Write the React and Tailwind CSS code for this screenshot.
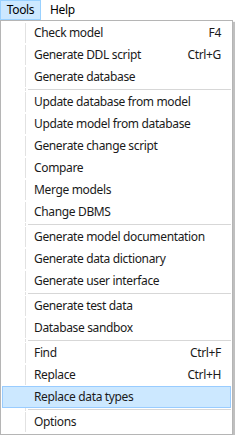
import React from 'react';

const items = [
    { label: 'Check model', shortcut: 'F4' },
    { label: 'Generate DDL script', shortcut: 'Ctrl+G' },
    { label: 'Generate database' },
    { sep: true },
    { label: 'Update database from model' },
    { label: 'Update model from database' },
    { label: 'Generate change script' },
    { label: 'Compare' },
    { label: 'Merge models' },
    { label: 'Change DBMS' },
    { sep: true },
    { label: 'Generate model documentation' },
    { label: 'Generate data dictionary' },
    { label: 'Generate user interface' },
    { sep: true },
    { label: 'Generate test data' },
    { label: 'Database sandbox' },
    { sep: true },
    { label: 'Find', shortcut: 'Ctrl+F' },
    { label: 'Replace', shortcut: 'Ctrl+H' },
    { label: 'Replace data types', active: true },
    { sep: true },
    { label: 'Options' },
];

function MenuRow({ item }) {
    if (item.sep) {
        return (
            <div className="flex h-[3px]">
                <div className="w-[24px] shrink-0 border-r border-[#e2e2e2]"></div>
                <div className="flex-1 flex items-center ml-[2px]">
                    <div className="w-full h-px bg-[#d7d7d7]"></div>
                </div>
            </div>
        );
    }
    return (
        <div className={`flex h-[22px] items-center border ${item.active ? 'bg-[#cce8ff] border-[#99ccff]' : 'border-transparent'}`}>
            <div className={`w-[23px] h-full shrink-0 border-r ${item.active ? 'border-transparent' : 'border-[#e2e2e2]'}`}></div>
            <div className="flex-1 pl-[8px] text-[#1a1a1a]">{item.label}</div>
            {item.shortcut && <div className="pr-[9px] text-[#1a1a1a]">{item.shortcut}</div>}
        </div>
    );
}

export default function App() {
    return (
        <div className="w-[235px] h-[435px] bg-white text-[12px] leading-none tracking-[-0.35px] overflow-hidden" style={{ fontFamily: '"Segoe UI", "Noto Sans", sans-serif' }}>
            {/* Menu bar */}
            <div className="flex h-[20px] items-stretch">
                <div className="w-[41px] border border-[#99d1ff] bg-[#cce8ff] flex items-center justify-center">Tools</div>
                <div className="px-[9px] flex items-center">Help</div>
            </div>

            {/* Tools dropdown */}
            <div className="w-[233px] border border-[#b5b5b5] bg-white p-px shadow-[2px_2px_1px_rgba(0,0,0,0.25)]">
                {items.map((item, i) => (
                    <MenuRow key={i} item={item} />
                ))}
            </div>
        </div>
    );
}
